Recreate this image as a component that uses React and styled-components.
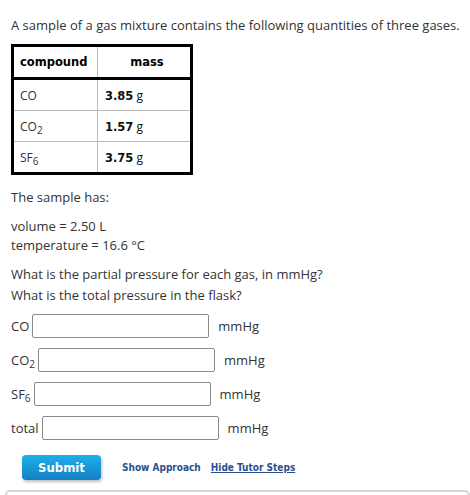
import React from "react";
import styled, { createGlobalStyle } from "styled-components";

const GlobalStyle = createGlobalStyle`
  body {
    margin: 0;
    background: #fff;
    font-family: "Open Sans", "DejaVu Sans", sans-serif;
    font-size: 13px;
    color: #333;
  }
`;

const compounds = [
  { name: "CO", sub: null, mass: "3.85" },
  { name: "CO", sub: "2", mass: "1.57" },
  { name: "SF", sub: "6", mass: "3.75" }
];

const answers = [
  { name: "CO", sub: null },
  { name: "CO", sub: "2" },
  { name: "SF", sub: "6" },
  { name: "total", sub: null }
];

const Formula = ({ name, sub }) => (
  <>
    {name}
    {sub ? <Sub>{sub}</Sub> : null}
  </>
);

const App = () => {
  return (
    <Page>
      <GlobalStyle />
      <Text>
        A sample of a gas mixture contains the following quantities of three
        gases.
      </Text>

      <Table>
        <thead>
          <tr>
            <Head>compound</Head>
            <Head center>mass</Head>
          </tr>
        </thead>
        <tbody>
          {compounds.map((c) => (
            <tr key={c.name + c.sub}>
              <Cell>
                <Formula name={c.name} sub={c.sub} />
              </Cell>
              <Cell value>
                <b>{c.mass}</b> g
              </Cell>
            </tr>
          ))}
        </tbody>
      </Table>

      <Intro>The sample has:</Intro>

      <Conditions>
        <div>volume = 2.50 L</div>
        <div>temperature = 16.6 °C</div>
      </Conditions>

      <Question>
        <div>What is the partial pressure for each gas, in mmHg?</div>
        <div>What is the total pressure in the flask?</div>
      </Question>

      <Answers>
        {answers.map((a) => (
          <AnswerRow key={a.name + a.sub}>
            <Label>
              <Formula name={a.name} sub={a.sub} />
            </Label>
            <Input type="text" />
            <Unit>mmHg</Unit>
          </AnswerRow>
        ))}
      </Answers>

      <Actions>
        <SubmitButton>Submit</SubmitButton>
        <ActionLink>Show Approach</ActionLink>
        <ActionLink underline>Hide Tutor Steps</ActionLink>
      </Actions>

      <NextBox />
    </Page>
  );
};

export default App;

const Page = styled.div`
  padding: 16px 0 0 11px;
  overflow: hidden;
  height: 479px;
`;

const Text = styled.p`
  margin: 0;
  line-height: 18px;
`;

const Sub = styled.sub`
  font-size: 10px;
  line-height: 0;
  vertical-align: -3px;
`;

const Table = styled.table`
  margin-top: 10px;
  border-collapse: collapse;
  border: 3px solid #000;
  width: 182px;
`;

const Head = styled.th`
  font-family: "DejaVu Sans", Verdana, sans-serif;
  font-weight: bold;
  font-size: 11.5px;
  color: #000;
  height: 30px;
  padding: 0 0 0 6px;
  text-align: ${(p) => (p.center ? "center" : "left")};
  border-bottom: 3px solid #000;
  border-left: 1px solid #bbb;
  width: ${(p) => (p.center ? "auto" : "77px")};
`;

const Cell = styled.td`
  height: 30px;
  padding: 0 0 0 ${(p) => (p.value ? "7px" : "6px")};
  border: 1px solid #bbb;
  color: ${(p) => (p.value ? "#111" : "#333")};
  font-size: 12px;

  b {
    font-family: "DejaVu Sans", Verdana, sans-serif;
    font-size: 11.5px;
    font-weight: bold;
  }
`;

const Intro = styled.p`
  margin: 13px 0 0;
  line-height: 18px;
`;

const Conditions = styled.div`
  margin-top: 11px;
  line-height: 19px;
`;

const Question = styled.div`
  margin-top: 9px;
  line-height: 21px;
`;

const Answers = styled.div`
  margin-top: 8px;
  display: flex;
  flex-direction: column;
  gap: 10px;
`;

const AnswerRow = styled.div`
  display: flex;
  align-items: center;
  height: 24px;
`;

const Label = styled.span`
  margin-right: 3px;
  line-height: 18px;
`;

const Input = styled.input`
  box-sizing: border-box;
  width: 177px;
  height: 24px;
  margin: 0;
  border: 1px solid #8a8a8a;
  border-radius: 2px;
  background: #fff;
`;

const Unit = styled.span`
  margin-left: 9px;
`;

const Actions = styled.div`
  margin-top: 15px;
  display: flex;
  align-items: center;
  padding-left: 11px;
`;

const SubmitButton = styled.button`
  width: 79px;
  height: 25px;
  border: none;
  border-radius: 4px;
  background: linear-gradient(#1bb0ea, #1580c4);
  box-shadow: 1px 2px 3px rgba(0, 0, 0, 0.25);
  color: #fff;
  font-family: "DejaVu Sans Condensed", "DejaVu Sans", sans-serif;
  font-weight: bold;
  font-size: 13px;
  padding: 0;
  margin-right: 21px;
`;

const ActionLink = styled.a`
  font-family: "DejaVu Sans Condensed", "DejaVu Sans", sans-serif;
  font-weight: bold;
  font-size: 10px;
  color: #2b4f8f;
  text-decoration: ${(p) => (p.underline ? "underline" : "none")};
  margin-right: 10px;
  cursor: pointer;
`;

const NextBox = styled.div`
  margin: 10px 0 0 -6px;
  height: 20px;
  border: 2px solid #d4d4d4;
  border-radius: 5px;
`;
